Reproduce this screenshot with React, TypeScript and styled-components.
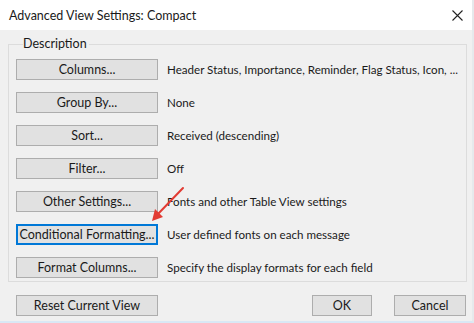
import React from 'react';
import styled, { createGlobalStyle } from 'styled-components';

const GlobalStyle = createGlobalStyle`
  html, body {
    margin: 0;
    padding: 0;
    background: #f0f0f0;
  }
  body {
    font-family: Lato, 'Noto Sans', sans-serif;
    font-size: 12px;
    color: #1a1a1a;
  }
`;

const rows = [
  { label: 'Columns...', text: 'Header Status, Importance, Reminder, Flag Status, Icon, ...' },
  { label: 'Group By...', text: 'None' },
  { label: 'Sort...', text: 'Received (descending)' },
  { label: 'Filter...', text: 'Off' },
  { label: 'Other Settings...', text: 'Fonts and other Table View settings' },
  { label: 'Conditional Formatting...', text: 'User defined fonts on each message', focused: true },
  { label: 'Format Columns...', text: 'Specify the display formats for each field' },
];

const App: React.FC = () => {
  return (
    <>
      <GlobalStyle />
      <Dialog>
        <TitleBar>
          <Title>Advanced View Settings: Compact</Title>
          <CloseIcon width="11" height="11" viewBox="0 0 11 11">
            <path d="M0.5 0.5 L10.5 10.5 M10.5 0.5 L0.5 10.5" stroke="#222" strokeWidth="1.1" />
          </CloseIcon>
        </TitleBar>
        <Body>
          <Group>
            <Legend>Description</Legend>
            <Rows>
              {rows.map((row) => (
                <Row key={row.label}>
                  <WideButton focused={row.focused}>{row.label}</WideButton>
                  <Info>{row.text}</Info>
                </Row>
              ))}
            </Rows>
            <Arrow width="40" height="40" viewBox="0 0 40 40">
              <path d="M33 2 L7 29" stroke="#e23b33" strokeWidth="2" strokeLinecap="round" />
              <path d="M2 35 L5 23 L13 31 Z" fill="#e23b33" />
            </Arrow>
          </Group>
          <Footer>
            <WideButton>Reset Current View</WideButton>
            <Actions>
              <DialogButton width={60}>OK</DialogButton>
              <DialogButton width={72}>Cancel</DialogButton>
            </Actions>
          </Footer>
        </Body>
      </Dialog>
    </>
  );
};

export default App;

const Dialog = styled.div`
  width: 474px;
  height: 323px;
  box-sizing: border-box;
  background: #f0f0f0;
  border-right: 2px solid #e6e9ec;
  border-bottom: 2px solid #d9e8f5;
  display: flex;
  flex-direction: column;
`;

const TitleBar = styled.div`
  height: 30px;
  background: #ffffff;
  display: flex;
  align-items: center;
  justify-content: space-between;
  padding: 0 9px 0 9px;
  box-sizing: border-box;
`;

const Title = styled.span`
  font-size: 12.5px;
  color: #1a1a1a;
`;

const CloseIcon = styled.svg`
  display: block;
`;

const Body = styled.div`
  flex: 1;
  padding: 6px 5px 0 8px;
  display: flex;
  flex-direction: column;
`;

const Group = styled.fieldset`
  position: relative;
  margin: 0;
  padding: 7px 0 0 7px;
  border: 1px solid #dcdcdc;
  height: 246px;
  box-sizing: border-box;
`;

const Legend = styled.legend`
  padding: 0 2px 0 0;
  margin-left: 7px;
  font-size: 12.5px;
  line-height: 16px;
  color: #1a1a1a;
`;

const Rows = styled.div`
  display: flex;
  flex-direction: column;
  gap: 12px;
`;

const Row = styled.div`
  display: flex;
  align-items: center;
  gap: 9px;
  height: 21px;
`;

const WideButton = styled.button<{ focused?: boolean }>`
  width: 142px;
  height: 21px;
  padding: 0;
  box-sizing: border-box;
  font-family: inherit;
  font-size: 12.5px;
  color: #1a1a1a;
  background: #e1e1e1;
  border: 1px solid ${({ focused }) => (focused ? '#0078d7' : '#adadad')};
  box-shadow: ${({ focused }) => (focused ? 'inset 0 0 0 1px #0078d7' : 'none')};
  white-space: nowrap;
`;

const Info = styled.span`
  font-size: 11.6px;
  white-space: nowrap;
`;

const Arrow = styled.svg`
  position: absolute;
  left: 141px;
  top: 134px;
`;

const Footer = styled.div`
  display: flex;
  justify-content: space-between;
  align-items: center;
  padding: 13px 1px 0 8px;
`;

const Actions = styled.div`
  display: flex;
  gap: 22px;
`;

const DialogButton = styled.button<{ width: number }>`
  width: ${({ width }) => width}px;
  height: 21px;
  padding: 0;
  box-sizing: border-box;
  font-family: inherit;
  font-size: 12.5px;
  color: #1a1a1a;
  background: #e1e1e1;
  border: 1px solid #adadad;
`;
